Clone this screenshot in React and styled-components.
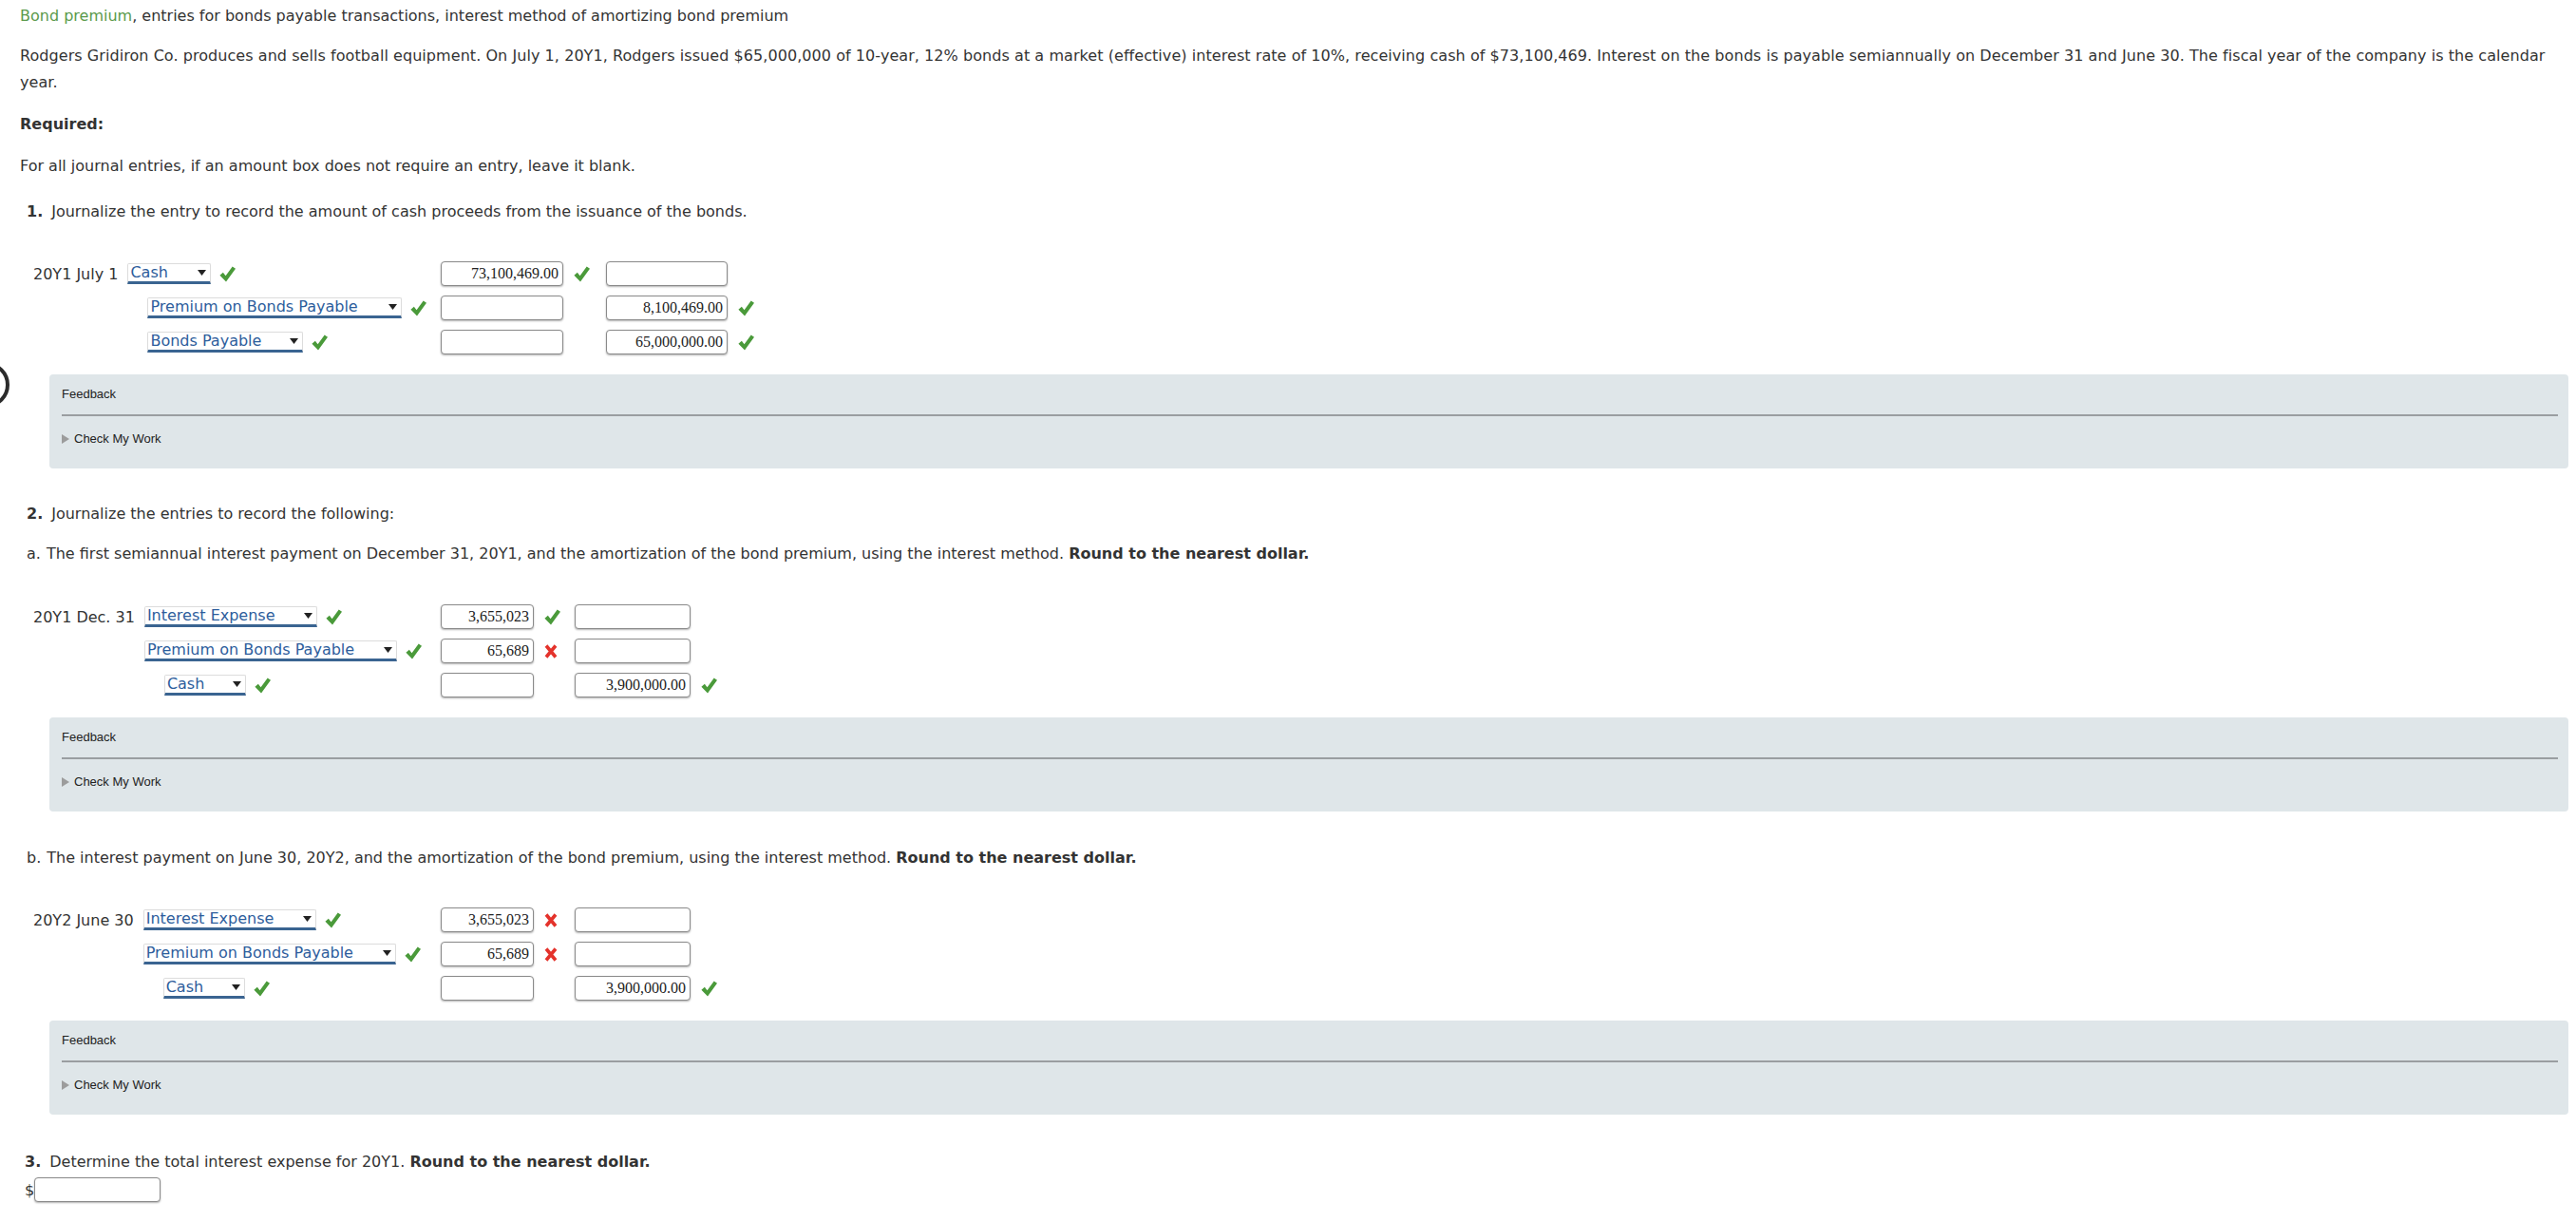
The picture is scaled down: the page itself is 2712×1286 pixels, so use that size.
import React from 'react';
import styled, { createGlobalStyle } from 'styled-components';

const GlobalStyle = createGlobalStyle`
  html, body {
    margin: 0;
    padding: 0;
    background: #fff;
  }
  body {
    font-family: "DejaVu Sans", Verdana, sans-serif;
    font-size: 16px;
    color: #333;
    overflow-x: hidden;
  }
`;

const Page = styled.div`
  position: relative;
  box-sizing: border-box;
  width: 100%;
  padding: 3px 8px 20px 21px;
`;

const Ring = styled.div`
  position: absolute;
  left: -38px;
  top: 381px;
  width: 48px;
  height: 48px;
  box-sizing: border-box;
  border: 4px solid #2b2b2b;
  border-radius: 50%;
`;

const Title = styled.div`
  line-height: 28px;
`;

const Topic = styled.span`
  color: #5b9a4c;
`;

const Para = styled.p`
  margin: ${(p) => p.$mt}px 0 0;
  line-height: 28px;
  letter-spacing: ${(p) => (p.$wide ? 0.06 : 0)}px;
`;

const Question = styled.div`
  margin-top: ${(p) => p.$mt}px;
  padding-left: ${(p) => (p.$tight ? 5 : 7)}px;
  line-height: 28px;
`;

const Num = styled.b`
  margin-right: 9px;
`;

const Letter = styled.span`
  margin-right: 6px;
`;

const JournalGrid = styled.div`
  display: grid;
  grid-template-columns: max-content 1fr ${(p) => p.$debit}px ${(p) => p.$credit}px;
  grid-auto-rows: 36px;
  align-items: center;
  width: ${(p) => 429 + p.$debit + p.$credit}px;
  margin: ${(p) => p.$mt}px 0 0 14px;
`;

const DateCell = styled.div`
  padding-right: 10px;
  white-space: nowrap;
`;

const AccountCell = styled.div`
  display: flex;
  align-items: center;
  padding-left: ${(p) => (p.$indent ? 21 : 0)}px;
`;

const Select = styled.div`
  display: inline-flex;
  align-items: center;
  justify-content: space-between;
  box-sizing: border-box;
  width: ${(p) => p.$w}px;
  height: 22px;
  padding: 0 4px 0 2px;
  border: 1px solid #dcdcdc;
  border-bottom: 3px solid #3a6491;
  border-radius: 2px 2px 0 0;
  color: #2d5d9c;
  white-space: nowrap;
  line-height: 18px;
`;

const AmountCell = styled.div`
  display: flex;
  align-items: center;
`;

const Amount = styled.input`
  box-sizing: border-box;
  width: ${(p) => p.$w}px;
  height: 26px;
  margin: 0;
  padding: 0 4px;
  border: 1px solid #8a8a8a;
  border-radius: 4px;
  box-shadow: 0 1px 2px rgba(0, 0, 0, 0.3);
  font-family: "Liberation Serif", "Times New Roman", serif;
  font-size: 16px;
  color: #222;
  text-align: right;
  background: #fff;
  outline: none;
`;

const MarkBox = styled.span`
  display: inline-flex;
  margin-left: ${(p) => p.$gap || 11}px;
`;

const FeedbackBox = styled.div`
  margin: ${(p) => p.$mt}px 0 0 31px;
  padding: 13px 11px 23px 13px;
  background: #dfe6e9;
  border-radius: 4px;
  font-family: "Liberation Sans", Arial, sans-serif;
  font-size: 13px;
  color: #222;
`;

const FeedbackTitle = styled.div`
  line-height: 16px;
`;

const Divider = styled.div`
  margin-top: 13px;
  height: 2px;
  background: #9a9ea1;
`;

const CheckWork = styled.div`
  display: flex;
  align-items: center;
  gap: 5px;
  margin-top: 16px;
  line-height: 16px;
`;

const DollarRow = styled.div`
  display: flex;
  align-items: center;
  margin: 2px 0 0 5px;
`;

const Dollar = styled.span`
  font-size: 16px;
`;

const Check = () => (
  <svg width="17" height="17" viewBox="0 0 16 16">
    <path d="M0.4 9.1 L3.6 6.4 L6.2 9.6 L12.9 0.4 L16 2.7 L6.6 15.6 Z" fill="#4a9a3a" />
  </svg>
);

const Cross = () => (
  <svg width="14" height="15" viewBox="0 0 14 15">
    <path d="M2 1.5 L12 13.5 M12 1.5 L2 13.5" stroke="#e4322b" strokeWidth="3.6" />
  </svg>
);

const Arrow = () => (
  <svg width="9" height="6" viewBox="0 0 9 6">
    <path d="M0 0 H9 L4.5 6 Z" fill="#222" />
  </svg>
);

const Mark = ({ type, gap }) =>
  type ? <MarkBox $gap={gap}>{type === 'ok' ? <Check /> : <Cross />}</MarkBox> : null;

const Feedback = ({ mt }) => (
  <FeedbackBox $mt={mt}>
    <FeedbackTitle>Feedback</FeedbackTitle>
    <Divider />
    <CheckWork>
      <svg width="8" height="10" viewBox="0 0 8 10">
        <path d="M0 0 L8 5 L0 10 Z" fill="#9c9c9c" />
      </svg>
      Check My Work
    </CheckWork>
  </FeedbackBox>
);

const Journal = ({ mt, debitW, creditW, cols, rows }) => (
  <JournalGrid $mt={mt} $debit={cols[0]} $credit={cols[1]}>
    {rows.map((r, i) => (
      <React.Fragment key={i}>
        <DateCell>{r.date || ''}</DateCell>
        <AccountCell $indent={r.indent}>
          <Select $w={r.w}>
            {r.account}
            <Arrow />
          </Select>
          <Mark type="ok" gap={9} />
        </AccountCell>
        <AmountCell>
          <Amount $w={debitW} readOnly value={r.debit || ''} />
          <Mark type={r.dMark} />
        </AmountCell>
        <AmountCell>
          <Amount $w={creditW} readOnly value={r.credit || ''} />
          <Mark type={r.cMark} />
        </AmountCell>
      </React.Fragment>
    ))}
  </JournalGrid>
);

const issue = [
  { date: '20Y1 July 1', account: 'Cash', w: 88, debit: '73,100,469.00', dMark: 'ok' },
  { account: 'Premium on Bonds Payable', w: 268, indent: true, credit: '8,100,469.00', cMark: 'ok' },
  { account: 'Bonds Payable', w: 164, indent: true, credit: '65,000,000.00', cMark: 'ok' },
];

const december = [
  { date: '20Y1 Dec. 31', account: 'Interest Expense', w: 182, debit: '3,655,023', dMark: 'ok' },
  { account: 'Premium on Bonds Payable', w: 266, debit: '65,689', dMark: 'bad' },
  { account: 'Cash', w: 86, indent: true, credit: '3,900,000.00', cMark: 'ok' },
];

const june = [
  { date: '20Y2 June 30', account: 'Interest Expense', w: 182, debit: '3,655,023', dMark: 'bad' },
  { account: 'Premium on Bonds Payable', w: 266, debit: '65,689', dMark: 'bad' },
  { account: 'Cash', w: 86, indent: true, credit: '3,900,000.00', cMark: 'ok' },
];

export default function App() {
  return (
    <>
      <GlobalStyle />
      <Page>
        <Ring />
        <Title>
          <Topic>Bond premium</Topic>, entries for bonds payable transactions, interest method of amortizing bond premium
        </Title>
        <Para $mt={14} $wide>
          Rodgers Gridiron Co. produces and sells football equipment. On July 1, 20Y1, Rodgers issued $65,000,000 of
          10-year, 12% bonds at a market (effective) interest rate of 10%, receiving cash of $73,100,469. Interest on the
          bonds is payable semiannually on December 31 and June 30. The fiscal year of the company is the calendar year.
        </Para>
        <Para $mt={16}>
          <b>Required:</b>
        </Para>
        <Para $mt={16}>For all journal entries, if an amount box does not require an entry, leave it blank.</Para>

        <Question $mt={20}>
          <Num>1.</Num>Journalize the entry to record the amount of cash proceeds from the issuance of the bonds.
        </Question>
        <Journal mt={33} cols={[174, 168]} debitW={129} creditW={128} rows={issue} />
        <Feedback mt={16} />

        <Question $mt={34}>
          <Num>2.</Num>Journalize the entries to record the following:
        </Question>
        <Question $mt={14}>
          <Letter>a.</Letter>The first semiannual interest payment on December 31, 20Y1, and the amortization of the bond
          premium, using the interest method. <b>Round to the nearest dollar.</b>
        </Question>
        <Journal mt={34} cols={[141, 162]} debitW={98} creditW={122} rows={december} />
        <Feedback mt={16} />

        <Question $mt={35}>
          <Letter>b.</Letter>The interest payment on June 30, 20Y2, and the amortization of the bond premium, using the
          interest method. <b>Round to the nearest dollar.</b>
        </Question>
        <Journal mt={33} cols={[141, 162]} debitW={98} creditW={122} rows={june} />
        <Feedback mt={16} />

        <Question $mt={36} $tight>
          <Num>3.</Num>Determine the total interest expense for 20Y1. <b>Round to the nearest dollar.</b>
        </Question>
        <DollarRow>
          <Dollar>$</Dollar>
          <Amount $w={133} readOnly value="" />
        </DollarRow>
      </Page>
    </>
  );
}
